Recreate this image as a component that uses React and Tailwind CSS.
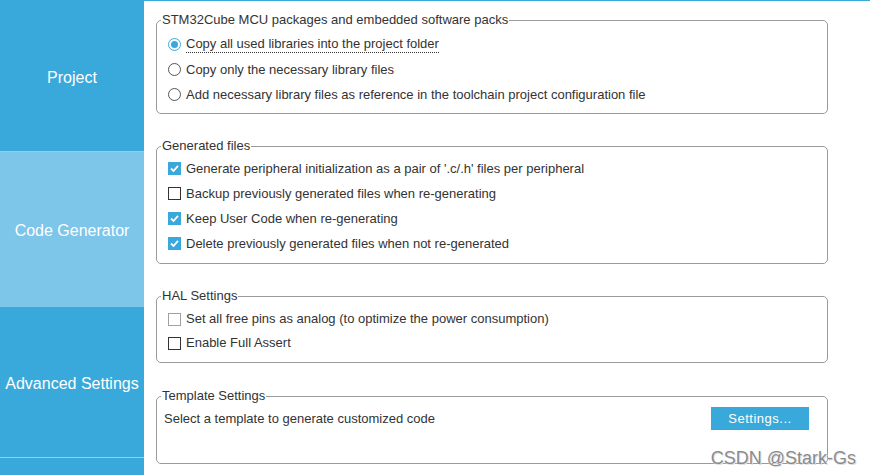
import React from 'react';

const font = { fontFamily: '"Liberation Sans", Arial, sans-serif' };

function Radio({ checked }) {
  return (
    <span className={`flex h-[13px] w-[13px] shrink-0 items-center justify-center rounded-full border bg-white ${checked ? 'border-[#3aa8db]' : 'border-[#555]'}`}>
      {checked && <span className="h-[7px] w-[7px] rounded-full bg-[#3aa8db]" />}
    </span>
  );
}

function Check({ checked, light }) {
  if (checked) {
    return (
      <span className="flex h-[13px] w-[13px] shrink-0 items-center justify-center bg-[#3aa8db]">
        <svg viewBox="0 0 13 13" className="h-[13px] w-[13px]">
          <path d="M3 6.5 L5.5 9 L10 3.8" fill="none" stroke="#fff" strokeWidth="1.8" />
        </svg>
      </span>
    );
  }
  return <span className={`h-[13px] w-[13px] shrink-0 border bg-white ${light ? 'border-[#a0a0a0]' : 'border-[#333]'}`} />;
}

function Group({ title, className, children }) {
  return (
    <div className={`relative rounded-[5px] border border-[#9a9a9a] ${className}`}>
      <span className="absolute -top-[9px] left-[4px] bg-white px-px text-[13px] leading-[16px] text-[#333]">
        {title}
      </span>
      {children}
    </div>
  );
}

function Row({ icon, label, focus, h = 'h-[25px]' }) {
  return (
    <div className={`flex items-center pl-[11px] ${h}`}>
      {icon}
      <span className={`ml-[5px] text-[13px] leading-[16px] text-[#333] ${focus ? 'border-b border-dotted border-[#333]' : ''}`}>
        {label}
      </span>
    </div>
  );
}

export default function App() {
  return (
    <div className="relative flex h-[475px] w-[870px] overflow-hidden bg-white" style={font}>
      {/* left navigation */}
      <div className="flex w-[144px] shrink-0 flex-col bg-[#39a9db] text-[16px] text-white">
        <div className="flex h-[152px] items-center justify-center border-b border-[#8fd0ef] pt-[4px]">Project</div>
        <div className="flex h-[155px] items-center justify-center bg-[#7dc5e9] pt-[2px]">Code Generator</div>
        <div className="flex h-[151px] items-center justify-center border-b border-[#8fd0ef] pt-[3px]">Advanced Settings</div>
      </div>

      {/* settings */}
      <div className="flex-1 border-t border-[#39a9db] pl-[12px] pt-[19px]">
        <div className="w-[672px]">
          <Group title="STM32Cube MCU packages and embedded software packs" className="h-[94px] pt-[11px]">
            <Row icon={<Radio checked />} label="Copy all used libraries into the project folder" focus />
            <Row icon={<Radio />} label="Copy only the necessary library files" />
            <Row icon={<Radio />} label="Add necessary library files as reference in the toolchain project configuration file" />
          </Group>

          <Group title="Generated files" className="mt-[32px] h-[118px] pt-[9px]">
            <Row icon={<Check checked />} label="Generate peripheral initialization as a pair of '.c/.h' files per peripheral" />
            <Row icon={<Check />} label="Backup previously generated files when re-generating" />
            <Row icon={<Check checked />} label="Keep User Code when re-generating" />
            <Row icon={<Check checked />} label="Delete previously generated files when not re-generated" />
          </Group>

          <Group title="HAL Settings" className="mt-[32px] h-[67px] pt-[10px]">
            <Row icon={<Check light />} label="Set all free pins as analog (to optimize the power consumption)" h="h-[24px]" />
            <Row icon={<Check />} label="Enable Full Assert" h="h-[24px]" />
          </Group>

          <Group title="Template Settings" className="mt-[33px] h-[68px] pt-[10px]">
            <div className="flex h-[23px] items-center justify-between pl-[7px] pr-[18px]">
              <span className="text-[13px] text-[#333]">Select a template to generate customized code</span>
              <button type="button" className="h-[23px] w-[98px] bg-[#39a9db] text-[13px] tracking-[0.5px] text-white">
                Settings...
              </button>
            </div>
          </Group>
        </div>
      </div>

      {/* watermark */}
      <span
        className="absolute bottom-[3px] right-[14px] text-[18px] text-[#8a8a8a]"
        style={{ textShadow: '0 0 1px #fff, 1px 1px 0 #ddd' }}
      >
        CSDN @Stark-Gs
      </span>
    </div>
  );
}
